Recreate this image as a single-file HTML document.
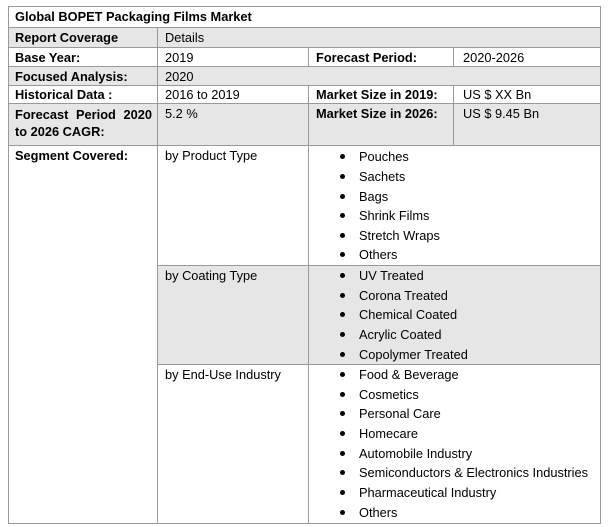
<!DOCTYPE html>
<html><head><meta charset="utf-8"><style>
body{margin:0;width:608px;height:527px;background:#fff;position:relative;font-family:"Liberation Sans",sans-serif;font-size:12.8px;color:#000;overflow:hidden}
.h{position:absolute;background:#999;height:1px}
.v{position:absolute;background:#999;width:1px}
.g{position:absolute;background:#e7e6e6}
.t{position:absolute;line-height:16px;white-space:nowrap}
b{font-weight:bold}
.bl{position:absolute;width:5px;height:5px;border-radius:50%;background:#000}
</style></head><body>
<div class="g" style="left:8px;top:27px;width:592px;height:20px"></div>
<div class="g" style="left:8px;top:66px;width:592px;height:19px"></div>
<div class="g" style="left:8px;top:103px;width:592px;height:42px"></div>
<div class="g" style="left:157px;top:265px;width:443px;height:99px"></div>

<div class="h" style="left:8px;top:6px;width:593px"></div>
<div class="h" style="left:8px;top:27px;width:593px"></div>
<div class="h" style="left:8px;top:47px;width:593px"></div>
<div class="h" style="left:8px;top:66px;width:593px"></div>
<div class="h" style="left:8px;top:85px;width:593px"></div>
<div class="h" style="left:8px;top:103px;width:593px"></div>
<div class="h" style="left:8px;top:145px;width:593px"></div>
<div class="h" style="left:157px;top:265px;width:444px"></div>
<div class="h" style="left:157px;top:364px;width:444px"></div>
<div class="h" style="left:8px;top:523px;width:593px"></div>
<div class="v" style="left:8px;top:6px;height:518px"></div>
<div class="v" style="left:600px;top:6px;height:518px"></div>
<div class="v" style="left:157px;top:27px;height:497px"></div>
<div class="v" style="left:308px;top:47px;height:19px"></div>
<div class="v" style="left:308px;top:85px;height:439px"></div>
<div class="v" style="left:453px;top:47px;height:19px"></div>
<div class="v" style="left:453px;top:85px;height:60px"></div>

<div class="t" style="left:15px;top:9px"><b>Global BOPET Packaging Films Market</b></div>
<div class="t" style="left:15px;top:30px"><b>Report Coverage</b></div>
<div class="t" style="left:165px;top:30px">Details</div>
<div class="t" style="left:15px;top:50px"><b>Base Year:</b></div>
<div class="t" style="left:165px;top:50px">2019</div>
<div class="t" style="left:316px;top:50px"><b>Forecast Period:</b></div>
<div class="t" style="left:463px;top:50px">2020-2026</div>
<div class="t" style="left:15px;top:69px"><b>Focused Analysis:</b></div>
<div class="t" style="left:165px;top:69px">2020</div>
<div class="t" style="left:15px;top:87px"><b>Historical Data :</b></div>
<div class="t" style="left:165px;top:87px">2016 to 2019</div>
<div class="t" style="left:316px;top:87px"><b>Market Size in 2019:</b></div>
<div class="t" style="left:463px;top:87px">US $ XX Bn</div>
<div class="t" style="left:15px;top:106px;width:137px;white-space:normal;text-align:justify;text-align-last:justify;line-height:18px"><b>Forecast Period 2020</b></div>
<div class="t" style="left:15px;top:124px"><b>to 2026 CAGR:</b></div>
<div class="t" style="left:165px;top:106px">5.2 %</div>
<div class="t" style="left:316px;top:106px"><b>Market Size in 2026:</b></div>
<div class="t" style="left:463px;top:106px">US $ 9.45 Bn</div>
<div class="t" style="left:15px;top:148px"><b>Segment Covered:</b></div>
<div class="t" style="left:165px;top:148px">by Product Type</div>
<div class="t" style="left:165px;top:268px">by Coating Type</div>
<div class="t" style="left:165px;top:367px">by End-Use Industry</div>

<div id="L"></div>
<script>
var items=[["Pouches",156],["Sachets",176],["Bags",196],["Shrink Films",215],["Stretch Wraps",235],["Others",254],
["UV Treated",275],["Corona Treated",295],["Chemical Coated",314],["Acrylic Coated",334],["Copolymer Treated",354],
["Food & Beverage",374],["Cosmetics",394],["Personal Care",413],["Homecare",433],["Automobile Industry",453],["Semiconductors & Electronics Industries",472],["Pharmaceutical Industry",492],["Others",512]];
var h="";items.forEach(function(i){h+='<div class="bl" style="left:340px;top:'+(i[1]-2)+'px"></div><div class="t" style="left:359px;top:'+(i[1]-7)+'px">'+i[0].replace("&","&amp;")+'</div>';});
document.getElementById("L").innerHTML=h;
</script>
</body></html>
